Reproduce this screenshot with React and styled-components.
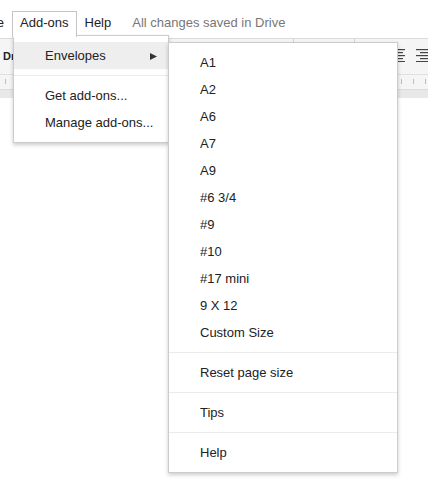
import styled, { createGlobalStyle } from "styled-components";

const GlobalStyle = createGlobalStyle`
  html, body {
    margin: 0;
    padding: 0;
    background: #fff;
  }
  body {
    font-family: "Liberation Sans", Arial, sans-serif;
    font-size: 13px;
    color: #222;
  }
`;

const Page = styled.div`
  position: relative;
  width: 428px;
  height: 485px;
  overflow: hidden;
  background: #fff;
`;

const MenuBar = styled.div`
  display: flex;
  align-items: flex-start;
  height: 38px;
  padding-top: 11px;
  box-sizing: border-box;
  margin-left: -35px;
`;

const MenuButton = styled.div`
  position: relative;
  z-index: ${(p) => (p.$open ? 3 : "auto")};
  height: ${(p) => (p.$open ? 25 : 24)}px;
  padding: 0 7px;
  border: 1px solid ${(p) => (p.$open ? "#c4c4c4" : "transparent")};
  border-bottom: none;
  background: ${(p) => (p.$open ? "#fff" : "transparent")};
  line-height: 22px;
  color: #222;
  white-space: nowrap;
`;

const SaveStatus = styled.div`
  margin-left: 13px;
  padding-top: 1px;
  line-height: 22px;
  color: #777;
  white-space: nowrap;
`;

const Toolbar = styled.div`
  display: flex;
  align-items: center;
  height: 35px;
  padding-left: 3px;
  border-top: 1px solid #dadada;
  border-bottom: 1px solid #e0e0e0;
  background: #f5f5f5;
`;

const FontLabel = styled.span`
  font-size: 11px;
  font-weight: bold;
  color: #222;
  margin-bottom: 1px;
`;

const ToolGroup = styled.div`
  display: flex;
  align-items: center;
  align-self: stretch;
  margin-left: auto;
`;

const ToolSeparator = styled.div`
  align-self: stretch;
  width: 1px;
  margin-left: ${(p) => p.$gap || 0}px;
  background: #d4d4d4;
`;

const ToolIcon = styled.svg`
  display: block;
  margin-left: ${(p) => p.$gap || 0}px;
  margin-bottom: 3px;
`;

const Ruler = styled.div`
  height: 14px;
  padding-top: 4px;
  box-sizing: border-box;
  background: #f5f5f5;
`;

const Ticks = styled.div`
  height: 5px;
  background-image: repeating-linear-gradient(
    to right,
    transparent 0 5px,
    #bdbdbd 5px 6px,
    transparent 6px 12px
  );
`;

const RulerShade = styled.div`
  height: 8px;
  border-top: 1px solid #dcdcdc;
  background: #e8e8e8;
`;

const Menu = styled.div`
  position: absolute;
  z-index: 2;
  left: ${(p) => p.$left}px;
  top: ${(p) => p.$top}px;
  width: ${(p) => p.$width}px;
  padding: 6px 0;
  background: #fff;
  border: 1px solid rgba(0, 0, 0, 0.2);
  box-shadow: 0 2px 4px rgba(0, 0, 0, 0.2);
`;

const MenuItem = styled.div`
  position: relative;
  height: 27px;
  line-height: 27px;
  padding-left: 31px;
  color: #222;
  white-space: nowrap;
  background: ${(p) => (p.$active ? "#eee" : "transparent")};
`;

const SubArrow = styled.svg`
  position: absolute;
  right: 11px;
  top: 11px;
`;

const MenuSeparator = styled.div`
  margin: 6px 0;
  border-top: 1px solid #ebebeb;
`;

const AlignIcon = ({ align, gap }) => {
  const rows = [0, 3, 6, 9, 12];
  return (
    <ToolIcon $gap={gap} width="12" height="13" viewBox="0 0 12 13">
      {rows.map((y, i) => {
        const long = i % 2 === 0;
        let x = 0;
        let w = 12;
        if (!long) {
          w = 8;
          x = align === "center" ? 2 : 4;
        }
        return <rect key={y} x={x} y={y} width={w} height="1.2" fill="#444" />;
      })}
    </ToolIcon>
  );
};

const envelopeSizes = [
  "A1",
  "A2",
  "A6",
  "A7",
  "A9",
  "#6 3/4",
  "#9",
  "#10",
  "#17 mini",
  "9 X 12",
  "Custom Size",
];

const App = () => {
  return (
    <Page>
      <GlobalStyle />
      <MenuBar>
        <MenuButton>Table</MenuButton>
        <MenuButton $open>Add-ons</MenuButton>
        <MenuButton>Help</MenuButton>
        <SaveStatus>All changes saved in Drive</SaveStatus>
      </MenuBar>

      <Toolbar>
        <FontLabel>Dr</FontLabel>
        <ToolGroup>
          <ToolSeparator />
          <ToolSeparator $gap={60} />
          <AlignIcon align="center" gap={38} />
          <AlignIcon align="right" gap={11} />
        </ToolGroup>
      </Toolbar>
      <Ruler>
        <Ticks />
      </Ruler>
      <RulerShade />

      <Menu $left={13} $top={35} $width={154}>
        <MenuItem $active>
          Envelopes
          <SubArrow width="7" height="7" viewBox="0 0 7 7">
            <polygon points="0,0 7,3.5 0,7" fill="#333" />
          </SubArrow>
        </MenuItem>
        <MenuSeparator />
        <MenuItem>Get add-ons...</MenuItem>
        <MenuItem>Manage add-ons...</MenuItem>
      </Menu>

      <Menu $left={168} $top={42} $width={228}>
        {envelopeSizes.map((size) => (
          <MenuItem key={size}>{size}</MenuItem>
        ))}
        <MenuSeparator />
        <MenuItem>Reset page size</MenuItem>
        <MenuSeparator />
        <MenuItem>Tips</MenuItem>
        <MenuSeparator />
        <MenuItem>Help</MenuItem>
      </Menu>
    </Page>
  );
};

export default App;
